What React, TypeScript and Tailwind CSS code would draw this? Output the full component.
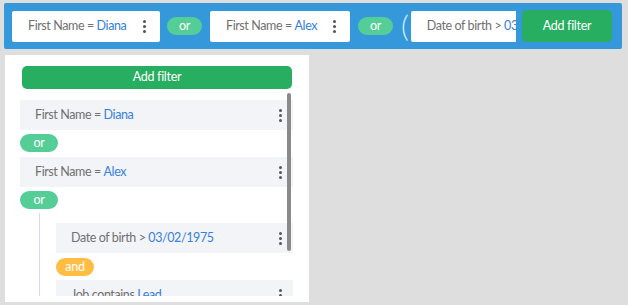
import React from 'react'

const font = { fontFamily: 'Lato, "Open Sans", sans-serif' }

function Dots({ className = '' }: { className?: string }) {
  return (
    <span className={`flex flex-col items-center gap-[2px] ${className}`}>
      <span className="w-[3px] h-[3px] rounded-full bg-[#555]" />
      <span className="w-[3px] h-[3px] rounded-full bg-[#555]" />
      <span className="w-[3px] h-[3px] rounded-full bg-[#555]" />
    </span>
  )
}

function BarItem({ text, value, width, dots = true }: { text: string; value: string; width: string; dots?: boolean }) {
  return (
    <div className={`${width} h-[31px] shrink-0 bg-white rounded-[2px] flex items-center pl-[16px] pr-[14px] text-[12.5px] tracking-[-0.4px] whitespace-pre overflow-hidden`}>
      <span className="text-[#707070]">{text} </span>
      <span className="text-[#3680de]">{value}</span>
      {dots && <Dots className="ml-auto" />}
    </div>
  )
}

function Pill({ label, color, className = '' }: { label: string; color: string; className?: string }) {
  return (
    <div className={`${color} h-[18px] rounded-full flex items-center justify-center text-white text-[12.5px] tracking-[-0.2px] leading-none ${className}`}>
      {label}
    </div>
  )
}

function Row({ text, value }: { text: string; value: string }) {
  return (
    <div className="h-[30px] bg-[#f3f4f8] flex items-center pl-[15px] pr-[11px] text-[12.5px] tracking-[-0.4px] whitespace-pre">
      <span className="text-[#707070]">{text} </span>
      <span className="text-[#3680de]">{value}</span>
      <Dots className="ml-auto" />
    </div>
  )
}

export default function App() {
  return (
    <div className="w-[628px] h-[305px] bg-[#dedede] pt-[3px] overflow-hidden" style={font}>
      {/* верхняя панель */}
      <div className="ml-[4px] w-[618px] h-[46px] bg-[#3498db] rounded-[2px] flex items-center pl-[8px] pr-[10px]">
        <div className="flex items-center w-[504px] shrink-0 overflow-hidden">
          <BarItem text="First Name =" value="Diana" width="w-[148px]" />
          <Pill label="or" color="bg-[#55cd97]" className="w-[35px] shrink-0 ml-[7px]" />
          <BarItem text="First Name =" value="Alex" width="w-[140px] ml-[8px]" />
          <Pill label="or" color="bg-[#55cd97]" className="w-[35px] shrink-0 ml-[8px]" />
          <span className="ml-[8px] text-[30px] leading-none font-light text-[#d6ecfb] -mt-[3px]">(</span>
          <BarItem text="Date of birth >" value="03/02/1975" width="w-[160px] ml-[2px]" dots={false} />
        </div>
        <button className="ml-[6px] w-[90px] h-[32px] shrink-0 bg-[#27ae60] rounded-[5px] text-white text-[12.5px] tracking-[-0.3px]">
          Add filter
        </button>
      </div>

      {/* боковая панель */}
      <div className="mt-[6px] ml-[5px] w-[304px] h-[247px] bg-white pt-[11px] pb-[6px] flex flex-col">
        <button className="mx-[17px] h-[23px] shrink-0 bg-[#27ae60] rounded-[5px] text-white text-[12.5px] tracking-[-0.3px] leading-none">
          Add filter
        </button>
        <div className="relative mt-[4px] flex-1 overflow-hidden">
          <div className="absolute left-[282px] top-0 w-[4px] h-[158px] rounded-full bg-[#8a8a8a] z-10" />
          <div className="pl-[15px] pr-[16px] pt-[7px] flex flex-col">
            <Row text="First Name =" value="Diana" />
            <Pill label="or" color="bg-[#55cd97]" className="w-[38px] mt-[4px]" />
            <div className="mt-[5px]"><Row text="First Name =" value="Alex" /></div>
            <Pill label="or" color="bg-[#55cd97]" className="w-[38px] mt-[4px]" />
            <div className="flex mt-[4px]">
              <div className="ml-[19px] w-px bg-[#d9dae3] mr-[16px]" />
              <div className="flex-1 flex flex-col pt-[10px] pb-[20px]">
                <Row text="Date of birth >" value="03/02/1975" />
                <Pill label="and" color="bg-[#ffbd44]" className="w-[38px] mt-[5px]" />
                <div className="mt-[4px]"><Row text="Job contains" value="Lead" /></div>
              </div>
            </div>
          </div>
        </div>
      </div>
    </div>
  )
}
